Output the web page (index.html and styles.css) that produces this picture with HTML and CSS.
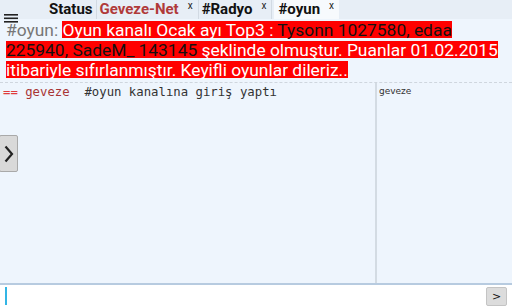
FILE: index.html
```html
<!DOCTYPE html>
<html>
  <head>
    <meta charset="UTF-8" />
    <title>#oyun</title>
    <link rel="stylesheet" href="styles.css">
  </head>
  <body>
    <div class="tabbar">
      <div class="menu">
        <svg width="14" height="9" viewBox="0 0 14 9"><rect y="0" width="14" height="1.6" fill="#222"/><rect y="3.5" width="14" height="1.6" fill="#222"/><rect y="7" width="14" height="1.6" fill="#222"/></svg>
      </div>
      <div class="tab tab-status">Status</div>
      <div class="tab tab-server">Geveze-Net<span class="close">x</span></div>
      <div class="tab">#Radyo<span class="close">x</span></div>
      <div class="tab active">#oyun<span class="close">x</span></div>
    </div>

    <div class="topic">
      <span class="chan">#oyun: </span><span class="hl">Oyun kanalı Ocak ayı Top3 : <span class="dark">Tysonn 1027580, edaa 225940, SadeM_ 143145</span> şeklinde olmuştur. Puanlar 01.02.2015 itibariyle sıfırlanmıştır. Keyifli oyunlar dileriz..</span>
    </div>

    <div class="main">
      <div class="chat">
        <div class="line"><span class="mark">==</span> <span class="nick">geveze</span>  #oyun kanalına giriş yaptı</div>
        <div class="drawer">
          <svg width="10" height="18" viewBox="0 0 10 18"><path d="M1.5 1.5 L8 9 L1.5 16.5" fill="none" stroke="#222" stroke-width="2.2"/></svg>
        </div>
      </div>
      <div class="nicks">geveze</div>
    </div>

    <div class="inputbar">
      <span class="cursor"></span>
      <div class="send">&gt;</div>
    </div>
  </body>
</html>
```

FILE: styles.css
```css
body {
  margin: 0;
  width: 512px;
  height: 307px;
  overflow: hidden;
  background-color: #eef5fd;
  font-family: 'Roboto', sans-serif;
  display: flex;
  flex-direction: column;
}
.tabbar {
  display: flex;
  align-items: stretch;
  height: 19px;
  background-color: #e7eef6;
  flex-shrink: 0;
}
.menu {
  width: 47px;
  padding: 8px 0 0 4px;
  box-sizing: border-box;
}
.tab {
  font-size: 15px;
  font-weight: bold;
  color: #111;
  line-height: 19px;
  padding: 0 5px 0 3px;
  border-right: 1px solid #d2dae3;
  white-space: nowrap;
}
.tab-status {
  padding-left: 2px;
  padding-right: 3px;
}
.tab-server {
  color: #b03a3a;
}
.tab .close {
  font-size: 10px;
  font-weight: normal;
  color: #222;
  vertical-align: top;
  line-height: 12px;
  margin-left: 9px;
}
.tab.active {
  background-color: #f7fafd;
  border-right: none;
  padding-left: 4px;
  margin-left: 2px;
}
.topic {
  height: 62px;
  padding: 1px 4px 0 6px;
  font-size: 17.4px;
  line-height: 20px;
  border-bottom: 1px dashed #cfd6de;
  flex-shrink: 0;
}
.chan {
  color: #777;
}
.hl {
  background: linear-gradient(to bottom, transparent 1px, #ff0000 1px, #ff0000 18px, transparent 18px);
  color: #ffffff;
}
.hl .dark {
  color: #111;
}
.main {
  flex: 1;
  display: flex;
  min-height: 0;
}
.chat {
  flex: 1;
  position: relative;
  padding: 2px 3px;
}
.line {
  font-family: 'DejaVu Sans Mono', monospace;
  font-size: 12.3px;
  line-height: 15px;
  color: #333;
  white-space: pre;
}
.mark {
  color: #e03a3a;
}
.nick {
  color: #a83434;
}
.drawer {
  position: absolute;
  left: -1px;
  top: 52px;
  width: 17px;
  height: 35px;
  background-color: #d9d9d9;
  border: 1px solid #a9a9a9;
  border-radius: 2px;
  display: flex;
  align-items: center;
  justify-content: center;
}
.nicks {
  width: 133px;
  border-left: 2px solid #d3dbe3;
  padding: 2px 0 0 2px;
  font-family: 'DejaVu Sans', sans-serif;
  font-size: 9px;
  line-height: 12px;
  color: #333;
}
.inputbar {
  height: 22px;
  border-top: 2px solid #b7cbe0;
  background-color: #ffffff;
  display: flex;
  align-items: center;
  justify-content: space-between;
  padding: 0 5px;
  flex-shrink: 0;
}
.cursor {
  width: 2px;
  height: 18px;
  background-color: #33b5e5;
}
.send {
  width: 19px;
  height: 17px;
  background-color: #dcdcdc;
  border: 1px solid #c4c4c4;
  border-radius: 2px;
  font-family: 'DejaVu Sans', sans-serif;
  font-size: 11px;
  line-height: 17px;
  text-align: center;
  color: #111;
}
```
